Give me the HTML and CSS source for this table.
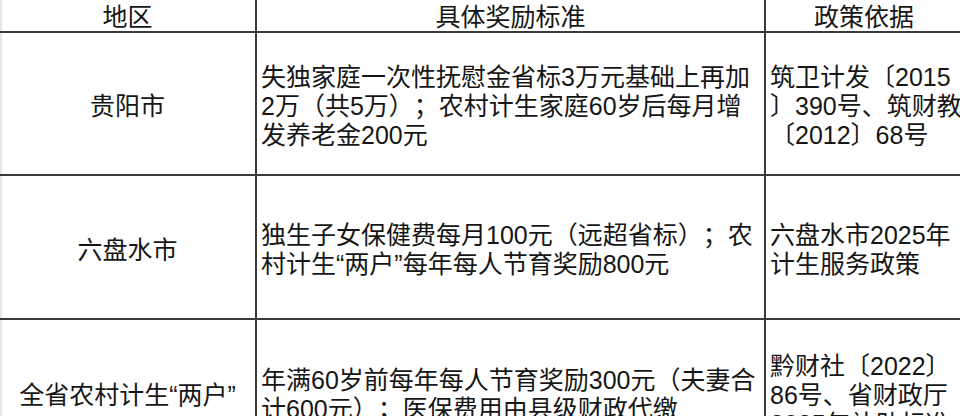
FILE: index.html
```html
<!DOCTYPE html>
<html lang="zh-CN">
<head>
<meta charset="utf-8">
<title>奖励标准</title>
<link rel="stylesheet" href="styles.css">
</head>
<body>
<div class="sheet">
  <div class="cell head c1">地区</div>
  <div class="cell head c2">具体奖励标准</div>
  <div class="cell head c3">政策依据</div>

  <div class="cell name c1">贵阳市</div>
  <div class="cell body c2">失独家庭一次性抚慰金省标3万元基础上再加<br>2万（共5万）；农村计生家庭60岁后每月增<br>发养老金200元</div>
  <div class="cell body c3">筑卫计发〔2015<br>〕390号、筑财教<br>〔2012〕68号</div>

  <div class="cell name c1">六盘水市</div>
  <div class="cell body c2">独生子女保健费每月100元（远超省标）；农<br>村计生“两户”每年每人节育奖励800元</div>
  <div class="cell body c3">六盘水市2025年<br>计生服务政策</div>

  <div class="cell name c1">全省农村计生“两户”</div>
  <div class="cell body c2">年满60岁前每年每人节育奖励300元（夫妻合<br>计600元）；医保费用由县级财政代缴</div>
  <div class="cell body c3">黔财社〔2022〕<br>86号、省财政厅<br>2025年补助标准</div>
</div>
</body>
</html>
```

FILE: styles.css
```css
html, body {
  margin: 0;
  padding: 0;
  background: #ffffff;
}

body {
  width: 960px;
  height: 416px;
  overflow: hidden;
  font-family: "Liberation Sans", "Noto Sans CJK SC", sans-serif;
  font-size: 25px;
  line-height: 29px;
  color: #161616;
  text-spacing-trim: space-all;
}

.sheet {
  display: grid;
  grid-template-columns: 255px 509px 196px;
  grid-template-rows: 33px 143px 144px 146px;
  border-top: 1px solid #dcdcdc;
  border-left: 2px solid #e6e6e6;
  margin-top: -1px;
}

.cell {
  box-sizing: border-box;
  display: flex;
  align-items: center;
  border-bottom: 2px solid #3a3a3a;
  white-space: nowrap;
}

.c1, .c2 {
  border-right: 2px solid #3a3a3a;
}

.c1 {
  margin-left: -2px;
}

.head {
  justify-content: center;
  padding-top: 4px;
}

.name {
  justify-content: center;
  padding-top: 6px;
}

.body {
  padding-left: 4px;
  padding-top: 6px;
}
```
